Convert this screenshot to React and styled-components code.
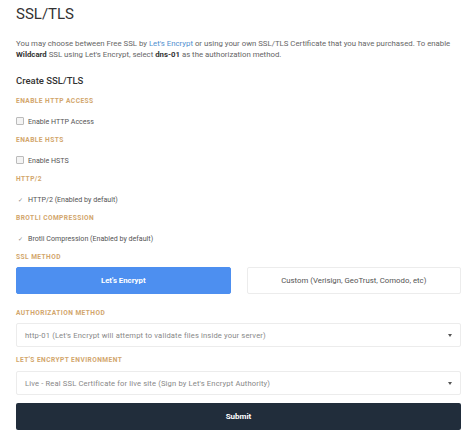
import React from 'react';
import styled, { createGlobalStyle } from 'styled-components';

const GlobalStyle = createGlobalStyle`
  html, body {
    margin: 0;
    padding: 0;
    background: #ffffff;
  }
  body {
    font-family: Roboto, "Liberation Sans", sans-serif;
    color: #555;
  }
`;

const sections = [
  { label: 'Enable HTTP Access', text: 'Enable HTTP Access', checked: false },
  { label: 'Enable HSTS', text: 'Enable HSTS', checked: false },
  { label: 'HTTP/2', text: 'HTTP/2 (Enabled by default)', checked: true },
  { label: 'Brotli Compression', text: 'Brotli Compression (Enabled by default)', checked: true },
];

function App() {
  return (
    <>
      <GlobalStyle />
      <Page>
        <Title>SSL/TLS</Title>
        <Intro>
          You may choose between Free SSL by <IntroLink>Let's Encrypt</IntroLink> or using your own
          SSL/TLS Certificate that you have purchased. To enable <b>Wildcard</b> SSL using Let's
          Encrypt, select <b>dns-01</b> as the authorization method.
        </Intro>

        <SubTitle>Create SSL/TLS</SubTitle>

        {sections.map((s) => (
          <Group key={s.label} $top={9} $gap={10}>
            <Label>{s.label}</Label>
            <CheckRow>
              <Box $checked={s.checked}>{s.checked && '✓'}</Box>
              {s.text}
            </CheckRow>
          </Group>
        ))}

        <Group $top={9} $gap={5}>
          <Label>SSL Method</Label>
          <MethodRow>
            <MethodButton $active>Let's Encrypt</MethodButton>
            <MethodButton>Custom (Verisign, GeoTrust, Comodo, etc)</MethodButton>
          </MethodRow>
        </Group>

        <Group $top={14} $gap={5}>
          <Label>Authorization Method</Label>
          <Select>
            http-01 (Let's Encrypt will attempt to validate files inside your server)
            <Caret />
          </Select>
        </Group>

        <Group $top={8} $gap={6}>
          <Label>Let's Encrypt Environment</Label>
          <Select>
            Live - Real SSL Certificate for live site (Sign by Let's Encrypt Authority)
            <Caret />
          </Select>
        </Group>

        <Submit>Submit</Submit>
      </Page>
    </>
  );
}

const Page = styled.div`
  width: 445px;
  padding: 5px 13px 0 16px;
  display: flex;
  flex-direction: column;
`;

const Title = styled.h1`
  margin: 0;
  font-size: 15px;
  line-height: 18px;
  font-weight: 400;
  color: #333;
`;

const Intro = styled.p`
  margin: 15px 0 0;
  font-size: 7.8px;
  line-height: 11px;
  color: #666;

  b {
    color: #333;
    font-weight: 700;
  }
`;

const IntroLink = styled.span`
  color: #4f8fcf;
`;

const SubTitle = styled.h2`
  margin: 15px 0 0;
  font-size: 9.5px;
  line-height: 12px;
  font-weight: 500;
  color: #333;
`;

const Group = styled.div`
  margin-top: ${(p) => p.$top}px;
  display: flex;
  flex-direction: column;
  gap: ${(p) => p.$gap}px;
`;

const Label = styled.div`
  height: 10px;
  line-height: 10px;
  font-size: 6.6px;
  font-weight: 700;
  letter-spacing: 0.45px;
  text-transform: uppercase;
  color: #d2a66c;
`;

const CheckRow = styled.div`
  display: flex;
  align-items: center;
  gap: 4px;
  height: 10px;
  font-size: 7.1px;
  color: #555;
`;

const Box = styled.span`
  width: 6px;
  height: 6px;
  border: 1px solid #bbb;
  border-radius: 1px;
  background: #f4f4f4;
  display: flex;
  align-items: center;
  justify-content: center;
  font-size: 6px;
  color: #888;
  ${(p) => p.$checked && `border-color: transparent; background: transparent;`}
`;

const MethodRow = styled.div`
  display: grid;
  grid-template-columns: 1fr 1fr;
  gap: 16px;
`;

const MethodButton = styled.div`
  height: 27px;
  border-radius: 2px;
  display: flex;
  align-items: center;
  justify-content: center;
  font-size: 7.8px;
  font-weight: ${(p) => (p.$active ? 700 : 400)};
  color: ${(p) => (p.$active ? '#fff' : '#555')};
  background: ${(p) => (p.$active ? '#4d8ff0' : '#fff')};
  border: 1px solid ${(p) => (p.$active ? '#4d8ff0' : '#ececec')};
  box-sizing: border-box;
`;

const Select = styled.div`
  height: 24px;
  box-sizing: border-box;
  border: 1px solid #ececec;
  border-radius: 2px;
  padding: 0 8px 0 8px;
  display: flex;
  align-items: center;
  justify-content: space-between;
  font-size: 7.6px;
  letter-spacing: 0.15px;
  color: #888;
`;

const Caret = styled.span`
  width: 0;
  height: 0;
  border-left: 2px solid transparent;
  border-right: 2px solid transparent;
  border-top: 3px solid #555;
`;

const Submit = styled.button`
  margin-top: 8px;
  height: 27px;
  border: none;
  border-radius: 2px;
  background: #212d3b;
  color: #fff;
  font-family: inherit;
  font-size: 8px;
  font-weight: 700;
`;

export default App;
